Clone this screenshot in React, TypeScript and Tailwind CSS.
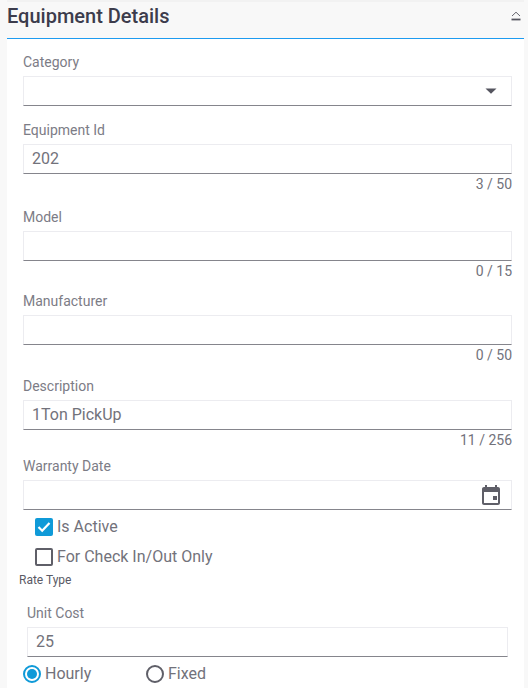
import React from "react";

const Field = ({ label, value, counter, icon, mtClass }: { label: string; value?: string; counter?: string; icon?: React.ReactNode; mtClass: string }) => (
  <div className={mtClass}>
    <div className="h-[28px] text-[14px] leading-[28px] text-[#7c7c86]">{label}</div>
    <div className="h-[30px] flex items-center justify-between bg-white border border-[#ececf0] border-b-[#85858c] pl-[8px] pr-[9px] text-[16px] text-[#72727b]">
      <span>{value}</span>
      {icon}
    </div>
    {counter && <div className="h-[21px] text-right text-[14px] leading-[21px] text-[#72727b]">{counter}</div>}
  </div>
);

const Caret = () => (
  <svg width="12" height="6" viewBox="0 0 12 6" className="mr-[5px]"><path d="M0.5 0.5h11L6 5.8z" fill="#55555f" /></svg>
);

const Calendar = () => (
  <svg width="24" height="24" viewBox="0 0 24 24" className="-mr-[1px]"><path fill="#5f5f68" d="M19 4h-1V2h-2v2H8V2H6v2H5c-1.1 0-2 .9-2 2v14c0 1.1.9 2 2 2h14c1.1 0 2-.9 2-2V6c0-1.1-.9-2-2-2zm0 16H5V9h14v11zm-5-7h4v4h-4z" /></svg>
);

export default function App() {
  return (
    <div className="w-[528px] h-[688px] overflow-hidden bg-[#f8f8f8] pl-[7px] pr-[4px]" style={{ fontFamily: "Roboto, sans-serif" }}>
      <div className="h-[39px] flex items-center justify-between border-t-2 border-t-[#f2f2f2] border-b border-b-[#1d9bf0] pr-[3px]">
        <span className="text-[20px] font-medium text-[#3c3c4c] -mt-[8px]">Equipment Details</span>
        <svg width="10" height="10" viewBox="0 0 10 10" className="-mt-[8px]">
          <path d="M1 5L5 1.2 9 5" fill="none" stroke="#66666f" strokeWidth="1" />
          <rect x="0.5" y="7.6" width="9" height="1.8" fill="#55555f" />
        </svg>
      </div>
      <div className="h-[649px] bg-white overflow-hidden">
        <div className="pl-[16px] pr-[12px]">
          <Field mtClass="mt-[9px]" label="Category" icon={<Caret />} />
          <Field mtClass="mt-[10px]" label="Equipment Id" value="202" counter="3 / 50" />
          <Field mtClass="mt-[8px]" label="Model" counter="0 / 15" />
          <Field mtClass="mt-[5px]" label="Manufacturer" counter="0 / 50" />
          <Field mtClass="mt-[6px]" label="Description" value="1Ton PickUp" counter="11 / 256" />
          <Field mtClass="mt-[1px]" label="Warranty Date" icon={<Calendar />} />
        </div>
        <div className="mt-[8px] ml-[28px] h-[18px] flex items-center gap-[4px] text-[16px] text-[#72727b]">
          <span className="w-[18px] h-[18px] rounded-[2px] bg-[#0f9ad8] flex items-center justify-center">
            <svg width="14" height="12" viewBox="0 0 14 12"><path d="M1.5 6l3.7 3.7L12.5 2" fill="none" stroke="#fff" strokeWidth="2.2" /></svg>
          </span>
          Is Active
        </div>
        <div className="mt-[12px] ml-[28px] h-[18px] flex items-center gap-[4px] text-[16px] text-[#72727b]">
          <span className="w-[18px] h-[18px] rounded-[2px] border-2 border-[#5f5f68] bg-white" />
          For Check In/Out Only
        </div>
        <div className="mt-[7px] ml-[12px] h-[14px] text-[12px] leading-[14px] text-[#5a5a65]">Rate Type</div>
        <div className="pl-[20px] pr-[16px]">
          <Field mtClass="mt-[12px]" label="Unit Cost" value="25" />
        </div>
        <div className="mt-[5px] ml-[16px] flex items-center h-[24px] text-[16px] text-[#72727b]">
          <span className="w-[18px] h-[18px] rounded-full border-2 border-[#0f9ad8] flex items-center justify-center">
            <span className="w-[10px] h-[10px] rounded-full bg-[#0f9ad8]" />
          </span>
          <span className="ml-[4px] w-[101px]">Hourly</span>
          <span className="w-[18px] h-[18px] rounded-full border-2 border-[#5f5f68]" />
          <span className="ml-[4px]">Fixed</span>
        </div>
      </div>
    </div>
  );
}
